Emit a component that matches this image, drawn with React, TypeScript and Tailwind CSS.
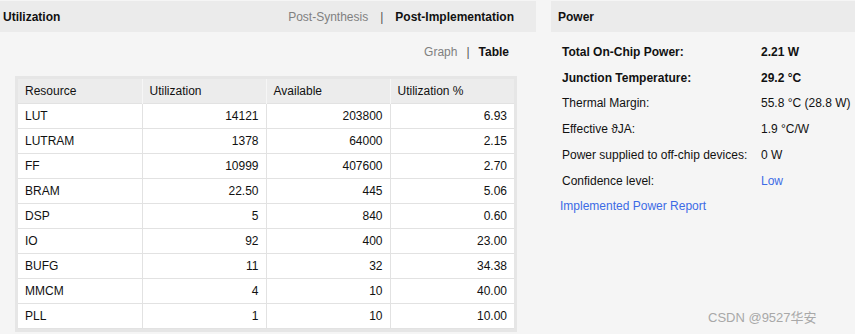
import React from "react";

const rows = [
  ["LUT", "14121", "203800", "6.93"],
  ["LUTRAM", "1378", "64000", "2.15"],
  ["FF", "10999", "407600", "2.70"],
  ["BRAM", "22.50", "445", "5.06"],
  ["DSP", "5", "840", "0.60"],
  ["IO", "92", "400", "23.00"],
  ["BUFG", "11", "32", "34.38"],
  ["MMCM", "4", "10", "40.00"],
  ["PLL", "1", "10", "10.00"],
];

const power = [
  { label: "Total On-Chip Power:", value: "2.21 W", bold: true },
  { label: "Junction Temperature:", value: "29.2 °C", bold: true },
  { label: "Thermal Margin:", value: "55.8 °C (28.8 W)" },
  { label: "Effective ϑJA:", value: "1.9 °C/W" },
  { label: "Power supplied to off-chip devices:", value: "0 W" },
  { label: "Confidence level:", value: "Low", link: true },
];

export default function App() {
  return (
    <div className="relative flex h-[334px] w-[855px] overflow-hidden bg-[#f5f5f5] text-[12px] text-[#111] font-['Liberation_Sans',Arial,sans-serif]">
      {/* Utilization */}
      <div className="flex w-[536px] flex-col">
        <div className="mt-px flex h-[31px] items-center justify-between bg-[#ebebeb] pl-[3px] pr-[22px]">
          <span className="font-bold">Utilization</span>
          <div className="flex items-center">
            <span className="text-[#808080]">Post-Synthesis</span>
            <span className="mx-[12px] text-[#555]">|</span>
            <span className="font-bold">Post-Implementation</span>
          </div>
        </div>
        <div className="flex h-[44px] items-center justify-end pr-[27px] pb-[4px]">
          <span className="text-[#808080]">Graph</span>
          <span className="mx-[9px] text-[#555]">|</span>
          <span className="font-bold">Table</span>
        </div>
        <div className="ml-[15px] w-[502px] bg-[#e6e6e6] p-[3px]">
          <table className="w-full table-fixed border-collapse bg-white">
            <thead>
              <tr className="h-[24px] bg-[#ececec]">
                {["Resource", "Utilization", "Available", "Utilization %"].map((h) => (
                  <th key={h} className="border-l border-[#f6f6f6] px-[7px] text-left font-normal first:border-l-0">
                    {h}
                  </th>
                ))}
              </tr>
            </thead>
            <tbody>
              {rows.map((r) => (
                <tr key={r[0]} className="h-[25px]">
                  {r.map((c, i) => (
                    <td
                      key={i}
                      className={`border border-[#e2e2e2] px-[7px] ${i === 0 ? "border-l-0 text-left" : "text-right"} ${i === 3 ? "border-r-0" : ""}`}
                    >
                      {c}
                    </td>
                  ))}
                </tr>
              ))}
            </tbody>
          </table>
        </div>
      </div>

      {/* Power */}
      <div className="ml-[15px] flex flex-1 flex-col">
        <div className="mt-px flex h-[31px] items-center bg-[#ebebeb] pl-[7px]">
          <span className="font-bold">Power</span>
        </div>
        <div className="flex flex-col pt-[7px] pl-[11px]">
          {power.map((p) => (
            <div key={p.label} className="flex h-[25.8px] items-center">
              <span className={`w-[199px] ${p.bold ? "font-bold" : ""}`}>{p.label}</span>
              <span className={`${p.bold ? "font-bold" : ""} ${p.link ? "text-[#3c6be6]" : ""}`}>{p.value}</span>
            </div>
          ))}
          <div className="-ml-[2px] flex h-[24px] items-center text-[#3c6be6]">Implemented Power Report</div>
        </div>
      </div>

      <div className="pointer-events-none absolute left-[708px] top-[308px] text-[13px] text-[#a8a8a8] font-['Liberation_Sans','Noto_Sans_CJK_SC',sans-serif]">
        CSDN @9527华安
      </div>
    </div>
  );
}
